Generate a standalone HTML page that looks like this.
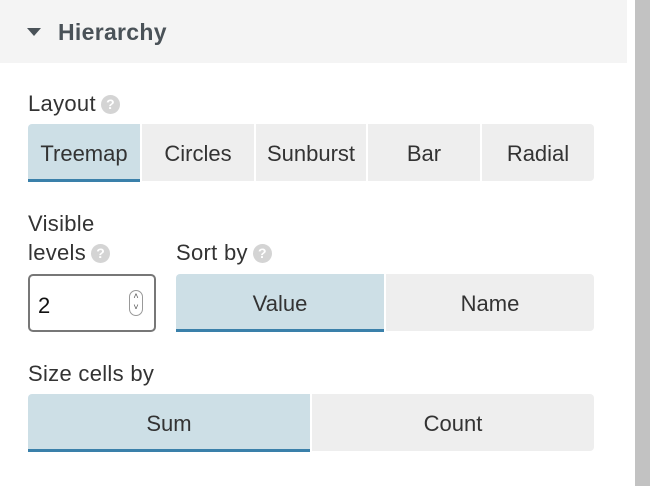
<!DOCTYPE html>
<html><head><style>
body{margin:0;width:650px;height:486px;background:#fff;font-family:"Liberation Sans",sans-serif;color:#333;position:relative;overflow:hidden}
.hdr{position:absolute;left:0;top:0;width:627px;height:63px;background:#f4f4f4}
.hdr .t{position:absolute;left:58px;top:19px;font-size:23px;font-weight:bold;color:#4a5258;letter-spacing:0.3px}
.tri{position:absolute;left:27px;top:28px;width:0;height:0;border-left:7px solid transparent;border-right:7px solid transparent;border-top:8px solid #4a5258}
.sb{position:absolute;left:635px;top:0;width:15px;height:486px;background:#c2c2c2}
.lbl{position:absolute;font-size:22px;color:#333;letter-spacing:0.3px}
.q{display:inline-block;width:19px;height:19px;border-radius:50%;background:#d4d4d4;color:#fff;font-size:14px;font-weight:bold;text-align:center;line-height:19px;vertical-align:2px;margin-left:5px;letter-spacing:0}
.b{position:absolute;background:#eee;font-size:22px;text-align:center;box-sizing:border-box;padding-top:2px}
.a{background:#cddfe6;border-bottom:3px solid #3a80aa}
.inp{position:absolute;left:28px;top:274px;width:128px;height:58px;border:2px solid #777;border-radius:5px;box-sizing:border-box;font-size:22px}
</style></head><body>
<div class="hdr"><div class="tri"></div><div class="t">Hierarchy</div></div>
<div class="sb"></div>
<div class="lbl" style="left:28px;top:91px">Layout<span class="q">?</span></div>
<div class="b a" style="left:28px;top:124px;width:112px;height:58px;line-height:56px;border-radius:4px 0 0 0">Treemap</div>
<div class="b" style="left:142px;top:124px;width:112px;height:57px;line-height:56px">Circles</div>
<div class="b" style="left:256px;top:124px;width:110px;height:57px;line-height:56px">Sunburst</div>
<div class="b" style="left:368px;top:124px;width:112px;height:57px;line-height:56px">Bar</div>
<div class="b" style="left:482px;top:124px;width:112px;height:57px;line-height:56px;border-radius:0 4px 4px 0">Radial</div>
<div class="lbl" style="left:28px;top:211px">Visible</div>
<div class="lbl" style="left:28px;top:240px">levels<span class="q">?</span></div>
<div class="lbl" style="left:176px;top:240px">Sort by<span class="q">?</span></div>
<div class="inp"><span style="position:absolute;left:8px;top:17px;color:#111">2</span>
<div style="position:absolute;left:99px;top:14px;width:14px;height:26px;border:1px solid #999;border-radius:7px;box-sizing:border-box;font-size:9px;line-height:11px;text-align:center;color:#555">˄<br>˅</div></div>
<div class="b a" style="left:176px;top:274px;width:208px;height:58px;line-height:56px;border-radius:4px 0 0 0">Value</div>
<div class="b" style="left:386px;top:274px;width:208px;height:57px;line-height:56px;border-radius:0 4px 4px 0">Name</div>
<div class="lbl" style="left:28px;top:361px">Size cells by</div>
<div class="b a" style="left:28px;top:394px;width:282px;height:58px;line-height:56px;border-radius:4px 0 0 0">Sum</div>
<div class="b" style="left:312px;top:394px;width:282px;height:57px;line-height:56px;border-radius:0 4px 4px 0">Count</div>
</body></html>
